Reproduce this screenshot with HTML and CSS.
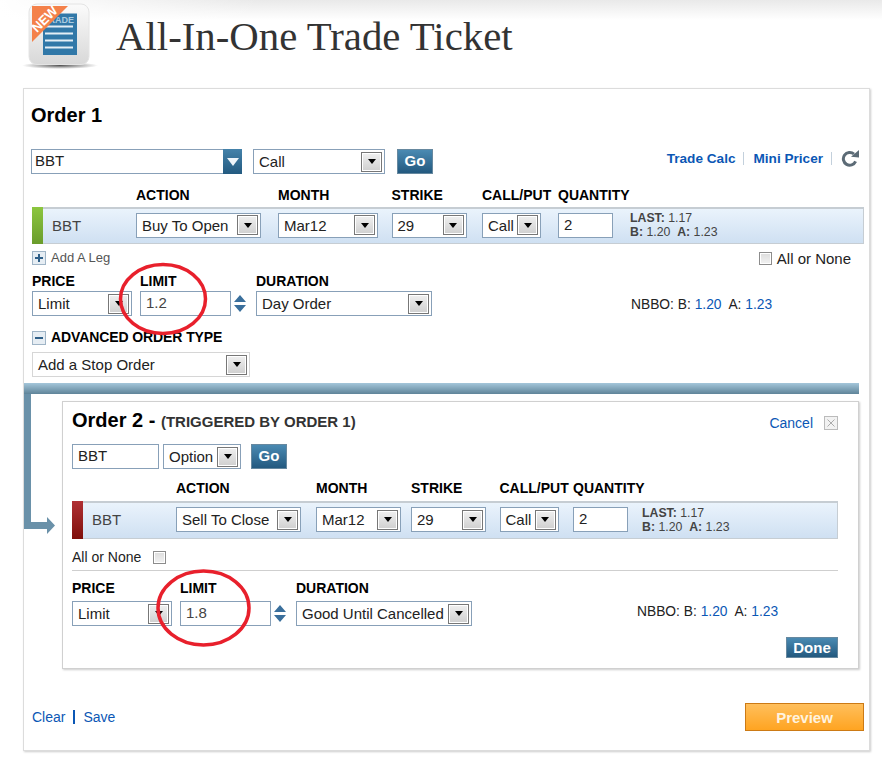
FILE: index.html
```html
<!DOCTYPE html>
<html lang="en">
<head>
<meta charset="utf-8">
<title>All-In-One Trade Ticket</title>
<link rel="stylesheet" href="styles.css">
</head>
<body>
<header class="page-head">
  <svg class="logo" width="80" height="70" viewBox="0 0 80 70">
    <defs>
      <linearGradient id="tile" x1="0" y1="0" x2="0" y2="1"><stop offset="0" stop-color="#fbfbfb"/><stop offset="1" stop-color="#d8d8d8"/></linearGradient>
      <radialGradient id="sh"><stop offset="0" stop-color="#555"/><stop offset="1" stop-color="#666" stop-opacity="0"/></radialGradient>
    </defs>
    <ellipse cx="38" cy="65.500" rx="38" ry="3.500" fill="url(#sh)"/>
    <rect x="7" y="4" width="60" height="60.500" rx="8" fill="url(#tile)" stroke="#e4e4e4"/>
    <rect x="21" y="13.500" width="34" height="41.500" fill="#3178a8"/>
    <text x="52" y="23" text-anchor="end" class="logo-trade">TRADE</text>
    <rect x="23" y="25.500" width="28" height="2" fill="#e4eef5"/>
    <rect x="23" y="32.500" width="28" height="2" fill="#e4eef5"/>
    <rect x="23" y="39.500" width="28" height="2" fill="#e4eef5"/>
    <rect x="23" y="46.500" width="28" height="2" fill="#e4eef5"/>
    <path d="M10 6 H46 L10 42 Z" fill="#f4814a"/>
    <text class="logo-new" transform="translate(15 33) rotate(-45)">NEW</text>
  </svg>
  <h1 class="page-title">All-In-One Trade Ticket</h1>
</header>

<main class="ticket">
  <section class="order-one">
    <h2 class="order-title">Order 1</h2>
    <div class="toolbar">
      <div class="symbol"><span class="symbol-text">BBT</span><span class="symbol-drop"><i class="tri-white"></i></span></div>
      <div class="sel sel-type"><span>Call</span><b class="arrow"></b></div>
      <button class="btn btn-go">Go</button>
      <nav class="tools">
        <a class="tool-link">Trade Calc</a><span class="tool-sep"></span>
        <a class="tool-link">Mini Pricer</a><span class="tool-sep"></span>
        <svg width="18" height="17" viewBox="0 0 18 17"><path d="M14.6 11.4 A6.4 6.4 0 1 1 13 4" fill="none" stroke="#5c6b76" stroke-width="3"/><path d="M10 6.8 L18 7.6 V0 Z" fill="#5c6b76"/></svg>
      </nav>
    </div>

    <div class="cols cols-a heads">
      <span></span><span>ACTION</span><span>MONTH</span><span>STRIKE</span><span>CALL/PUT</span><span>QUANTITY</span>
    </div>
    <div class="cols cols-a leg">
      <div class="leg-name"><i class="strip strip-buy"></i>BBT</div>
      <div class="sel w-125"><span>Buy To Open</span><b class="arrow"></b></div>
      <div class="sel w-100"><span>Mar12</span><b class="arrow"></b></div>
      <div class="sel w-75"><span>29</span><b class="arrow"></b></div>
      <div class="sel w-59"><span>Call</span><b class="arrow"></b></div>
      <div class="field w-55">2</div>
      <div class="quote"><div><b>LAST:</b> 1.17</div><div><b>B:</b> 1.20&nbsp; <b>A:</b> 1.23</div></div>
    </div>

    <div class="leg-tools">
      <span class="box-icon"><svg width="10" height="10" viewBox="0 0 10 10"><path d="M1 5 H9 M5 1 V9" stroke="#2f5f88" stroke-width="2"/></svg></span>
      <span class="add-leg">Add A Leg</span>
      <label class="aon aon-one"><i class="check"></i>All or None</label>
    </div>

    <div class="price-row price-a">
      <div><div class="head">PRICE</div><div class="sel w-100"><span>Limit</span><b class="arrow"></b></div></div>
      <div class="limit-col">
        <div class="head">LIMIT</div>
        <div class="limit-line"><div class="field w-91 muted">1.2</div><svg class="spin" width="12" height="17" viewBox="0 0 12 17"><path d="M6 0 L12 7 H0 Z M0 10 H12 L6 17 Z" fill="#3a6f9c"/></svg></div>
        <svg class="mark mark-a" width="90" height="74" viewBox="0 0 90 74"><ellipse cx="45" cy="37" rx="42.500" ry="34.500" fill="none" stroke="#e8202c" stroke-width="3.500"/></svg>
      </div>
      <div><div class="head">DURATION</div><div class="sel w-176"><span>Day Order</span><b class="arrow"></b></div></div>
      <div class="nbbo">NBBO: B: <a>1.20</a>&nbsp; A: <a>1.23</a></div>
    </div>

    <div class="advanced">
      <span class="box-icon"><svg width="10" height="10" viewBox="0 0 10 10"><path d="M1 5 H9" stroke="#2f5f88" stroke-width="2"/></svg></span>
      <span class="head adv-label">ADVANCED ORDER TYPE</span>
    </div>
    <div class="sel sel-stop"><span>Add a Stop Order</span><b class="arrow"></b></div>
  </section>

  <div class="band"></div>

  <div class="order-two-wrap">
    <svg class="connector" width="34" height="142" viewBox="0 0 34 142"><path d="M0 0 H7 V128 H23 V123 L31 131.500 L23 140 V135 H0 Z" fill="#6a91a9"/></svg>
    <section class="order-two">
      <div class="two-head">
        <h2 class="order-title">Order 2 - <small class="trigger">(TRIGGERED BY ORDER 1)</small></h2>
        <a class="cancel">Cancel</a>
        <span class="close-box"><svg width="10" height="10" viewBox="0 0 10 10"><path d="M1.500 1.500 L8.500 8.500 M8.500 1.500 L1.500 8.500" stroke="#aaa" stroke-width="1"/></svg></span>
      </div>
      <div class="toolbar toolbar-two">
        <div class="field w-87">BBT</div>
        <div class="sel w-78"><span>Option</span><b class="arrow"></b></div>
        <button class="btn btn-go">Go</button>
      </div>
      <div class="cols cols-b heads">
        <span></span><span>ACTION</span><span>MONTH</span><span>STRIKE</span><span>CALL/PUT</span><span>QUANTITY</span>
      </div>
      <div class="cols cols-b leg leg-two">
        <div class="leg-name"><i class="strip strip-sell"></i>BBT</div>
        <div class="sel w-125"><span>Sell To Close</span><b class="arrow"></b></div>
        <div class="sel w-85"><span>Mar12</span><b class="arrow"></b></div>
        <div class="sel w-75"><span>29</span><b class="arrow"></b></div>
        <div class="sel w-59"><span>Call</span><b class="arrow"></b></div>
        <div class="field w-55">2</div>
        <div class="quote"><div><b>LAST:</b> 1.17</div><div><b>B:</b> 1.20&nbsp; <b>A:</b> 1.23</div></div>
      </div>
      <label class="aon aon-two">All or None<i class="check"></i></label>
      <hr class="rule">
      <div class="price-row price-b">
        <div><div class="head">PRICE</div><div class="sel w-100"><span>Limit</span><b class="arrow"></b></div></div>
        <div class="limit-col">
          <div class="head">LIMIT</div>
          <div class="limit-line"><div class="field w-91 muted">1.8</div><svg class="spin" width="12" height="17" viewBox="0 0 12 17"><path d="M6 0 L12 7 H0 Z M0 10 H12 L6 17 Z" fill="#3a6f9c"/></svg></div>
          <svg class="mark mark-b" width="95" height="78" viewBox="0 0 95 78"><ellipse cx="47.500" cy="39" rx="45.500" ry="37" fill="none" stroke="#e8202c" stroke-width="3.500"/></svg>
        </div>
        <div><div class="head">DURATION</div><div class="sel w-176"><span>Good Until Cancelled</span><b class="arrow"></b></div></div>
        <div class="nbbo">NBBO: B: <a>1.20</a>&nbsp; A: <a>1.23</a></div>
      </div>
      <div class="done-row"><button class="btn btn-done">Done</button></div>
    </section>
  </div>

  <footer class="ticket-foot">
    <a class="foot-link">Clear</a><span class="foot-sep"></span><a class="foot-link">Save</a>
    <button class="btn btn-preview">Preview</button>
  </footer>
</main>
</body>
</html>
```

FILE: styles.css
```css
* { box-sizing: border-box; }
html, body { margin: 0; padding: 0; }
body {
  width: 882px;
  height: 764px;
  overflow: hidden;
  background: #fff;
  color: #222;
  font-family: "Liberation Sans", Arial, sans-serif;
  font-size: 15px;
}
a { color: #0b57b5; }

/* page header */
.page-head {
  height: 88px;
  display: flex;
  align-items: flex-start;
  background:
    linear-gradient(to right, #fff 0, rgba(255, 255, 255, 0) 260px),
    linear-gradient(#e9e9e9, #fff 20px);
}
.logo { margin-left: 22px; flex: none; }
.logo-trade { font: bold 9px "Liberation Sans", sans-serif; fill: #a9cbe0; }
.logo-new { font: bold 13px "Liberation Sans", sans-serif; fill: #fff; }
.page-title {
  margin: 14px 0 0 14px;
  font: normal 40.800px/46px "Liberation Serif", "Times New Roman", serif;
  color: #333;
}

/* main card */
.ticket {
  margin-left: 23px;
  width: 847px;
  height: 663px;
  border: 1px solid #dcdcdc;
  box-shadow: 1px 1px 2px #ccc;
}
.order-one { padding: 14px 0 0 8px; width: 840px; }
.order-title {
  margin: 0 0 0 -1px;
  font: bold 20px/24px "Liberation Sans", sans-serif;
  color: #000;
}

/* toolbars */
.toolbar { display: flex; align-items: flex-start; margin: 22px 0 0 -1px; width: 828px; }
.symbol { display: flex; width: 211px; height: 25px; border: 1px solid #88a0b8; }
.symbol-text { flex: 1; padding-left: 3px; line-height: 22px; }
.symbol-drop {
  width: 19px;
  margin: -1px -1px -1px 0;
  display: flex;
  align-items: center;
  justify-content: center;
  background: linear-gradient(#4482aa, #235a80);
}
.tri-white { border: 6px solid transparent; border-top: 8px solid #eef5fa; border-bottom: 0; }
.sel-type { width: 132px; margin-left: 11px; }
.toolbar .btn-go { margin-left: 12px; }
.tools { margin-left: auto; display: flex; align-items: center; height: 18px; }
.tool-link { font-weight: bold; font-size: 13.600px; color: #0b57b5; }
.tool-sep { width: 1px; height: 13px; margin: 0 9px 0 8px; background: #c3d0dc; }

/* form controls */
.sel, .field {
  height: 25px;
  border: 1px solid #88a0b8;
  background: #fff;
  color: #222;
  font-size: 15px;
  line-height: 23px;
}
.sel { display: flex; align-items: center; padding: 0 2px 0 5px; }
.sel > span { flex: 1; white-space: nowrap; }
.field { padding-left: 5px; line-height: 22px; }
.muted { color: #444; }
.arrow {
  flex: none;
  width: 21px;
  height: 20px;
  display: flex;
  align-items: center;
  justify-content: center;
  border: 1px solid #777;
  box-shadow: inset 0 0 0 1px #fff;
  background: linear-gradient(#f0f0f0, #cfcfcf);
}
.arrow::after {
  content: "";
  border: 4.5px solid transparent;
  border-top: 5px solid #000;
  border-bottom: 0;
}
.w-55 { width: 55px; }
.w-59 { width: 59px; }
.w-75 { width: 75px; }
.w-78 { width: 78px; }
.w-85 { width: 85px; }
.w-87 { width: 87px; }
.w-91 { width: 91px; }
.w-100 { width: 100px; }
.w-125 { width: 125px; }
.w-176 { width: 176px; }

.btn {
  border: 1px solid #66889f;
  padding: 0;
  color: #fff;
  font: bold 15px "Liberation Sans", sans-serif;
  background: linear-gradient(#4a8ab2, #23597f);
  display: block;
}
.btn-go { width: 36px; height: 25px; padding-bottom: 2px; }
.btn-done { width: 52px; height: 21px; margin-left: auto; }
.btn-preview {
  width: 119px;
  height: 28px;
  margin-left: auto;
  border-color: #cc7a15;
  color: #fff3df;
  font-size: 15px;
  background: linear-gradient(#ffbf5c, #ffa421);
}

/* leg grids */
.cols { display: grid; }
.cols-a { grid-template-columns: 104px 142px 113.500px 90.500px 76px 72px 1fr; width: 832px; }
.cols-b { grid-template-columns: 104px 140px 95px 88.500px 73.500px 69px 1fr; width: 766px; }
.heads { margin-top: 14px; font-weight: bold; font-size: 14px; line-height: 14px; color: #000; white-space: nowrap; }
.head { font-weight: bold; font-size: 14px; line-height: 14px; color: #000; white-space: nowrap; }
.leg {
  margin-top: 5px;
  height: 37px;
  padding-bottom: 2px;
  align-items: center;
  border: 1px solid #c6cdd3;
  border-width: 2px 1px 1px 0;
  background: linear-gradient(#eaf3fc, #cfe0f2);
}
.leg-name { align-self: stretch; display: flex; align-items: center; color: #444; margin-top: -2px; margin-bottom: -3px; padding-bottom: 1px; }
.strip { width: 11px; height: calc(100% + 1px); margin-right: 9px; margin-bottom: -1px; }
.strip-buy { background: linear-gradient(#8cc63f, #6a9c2c); }
.strip-sell { background: linear-gradient(#b03034, #7f0f0a); }
.quote { font-size: 12.300px; line-height: 14px; color: #444; white-space: nowrap; }

.leg-tools { display: flex; align-items: center; margin-top: 7px; width: 819px; height: 14px; }
.box-icon {
  flex: none;
  width: 14px;
  height: 14px;
  display: flex;
  align-items: center;
  justify-content: center;
  border: 1px solid #9fb4c6;
  background: #e6edf3;
}
.add-leg { margin: -2px 0 0 5px; font-size: 13px; color: #555; }
.aon { display: flex; align-items: center; color: #222; }
.aon-one { margin-left: auto; font-size: 15px; }
.aon-one .check { margin-right: 5px; }
.aon-two { margin-top: 11px; height: 14px; font-size: 14px; }
.aon-two .check { margin-left: 12px; }
.check {
  width: 13px;
  height: 13px;
  border: 1px solid #8c8c8c;
  box-shadow: inset 0 0 0 1px #fff;
  background: linear-gradient(#dcdcdc, #f2f2f2);
}

/* price rows */
.price-row { display: grid; align-items: end; }
.price-a { grid-template-columns: 108px 116px 375px 1fr; margin-top: 9px; }
.price-b { grid-template-columns: 108px 116px 341px 1fr; margin-top: 10px; }
.price-row .head { margin-bottom: 3px; }
.price-b .head { margin-bottom: 6px; }
.limit-col { position: relative; }
.limit-line { display: flex; align-items: center; gap: 3px; }
.spin { flex: none; }
.mark { position: absolute; pointer-events: none; }
.mark-a { left: -22px; top: -12px; }
.mark-b { left: -24px; top: -12px; }
.nbbo { font-size: 13.800px; line-height: 25px; color: #222; white-space: nowrap; margin-bottom: -1px; }
.price-b .nbbo { margin-bottom: 0; padding-bottom: 2px; }
.nbbo a { color: #0b57b5; }

.advanced { display: flex; align-items: center; gap: 5px; margin-top: 15px; height: 14px; }
.adv-label { margin-top: -3px; letter-spacing: -0.100px; }
.sel-stop { width: 218px; margin-top: 7px; border-color: #d6d6d6; }

/* order two */
.band { margin-top: 6px; width: 835px; height: 11px; background: linear-gradient(#a4c6da, #5f8499); }
.order-two-wrap { position: relative; padding: 7px 0 0 38px; }
.connector { position: absolute; left: 0; top: 0; }
.order-two {
  width: 797px;
  height: 268px;
  padding: 7px 0 0 9px;
  border: 1px solid #d0d0d0;
  box-shadow: 1px 1px 2px #ccc;
}
.two-head { display: flex; align-items: center; width: 766px; height: 24px; }
.two-head .order-title { margin-left: 0; white-space: nowrap; }
.trigger { font-size: 15px; color: #333; }
.cancel { margin: 4px 0 0 auto; font-size: 14px; color: #0b57b5; }
.close-box {
  width: 14px;
  height: 14px;
  margin: 4px 0 0 11px;
  display: flex;
  align-items: center;
  justify-content: center;
  border: 1px solid #bbb;
  background: #f2f2f2;
}
.toolbar-two { margin: 11px 0 0 0; width: auto; gap: 4px; }
.toolbar-two .btn-go { margin-left: 6px; }
.heads.cols-b { margin-top: 12px; }
.leg-two { margin-top: 6px; height: 38px; }
.rule { margin: 6px 0 0; width: 766px; height: 1px; border: 0; background: #cfcfcf; }
.done-row { width: 766px; margin-top: 11px; }

/* footer */
.ticket-foot { display: flex; align-items: center; margin-top: 34px; padding: 0 5px 0 8px; font-size: 14px; }
.foot-link { color: #0b57b5; }
.foot-sep { width: 2px; height: 14px; margin: 0 8px; background: #0b57b5; }
```
